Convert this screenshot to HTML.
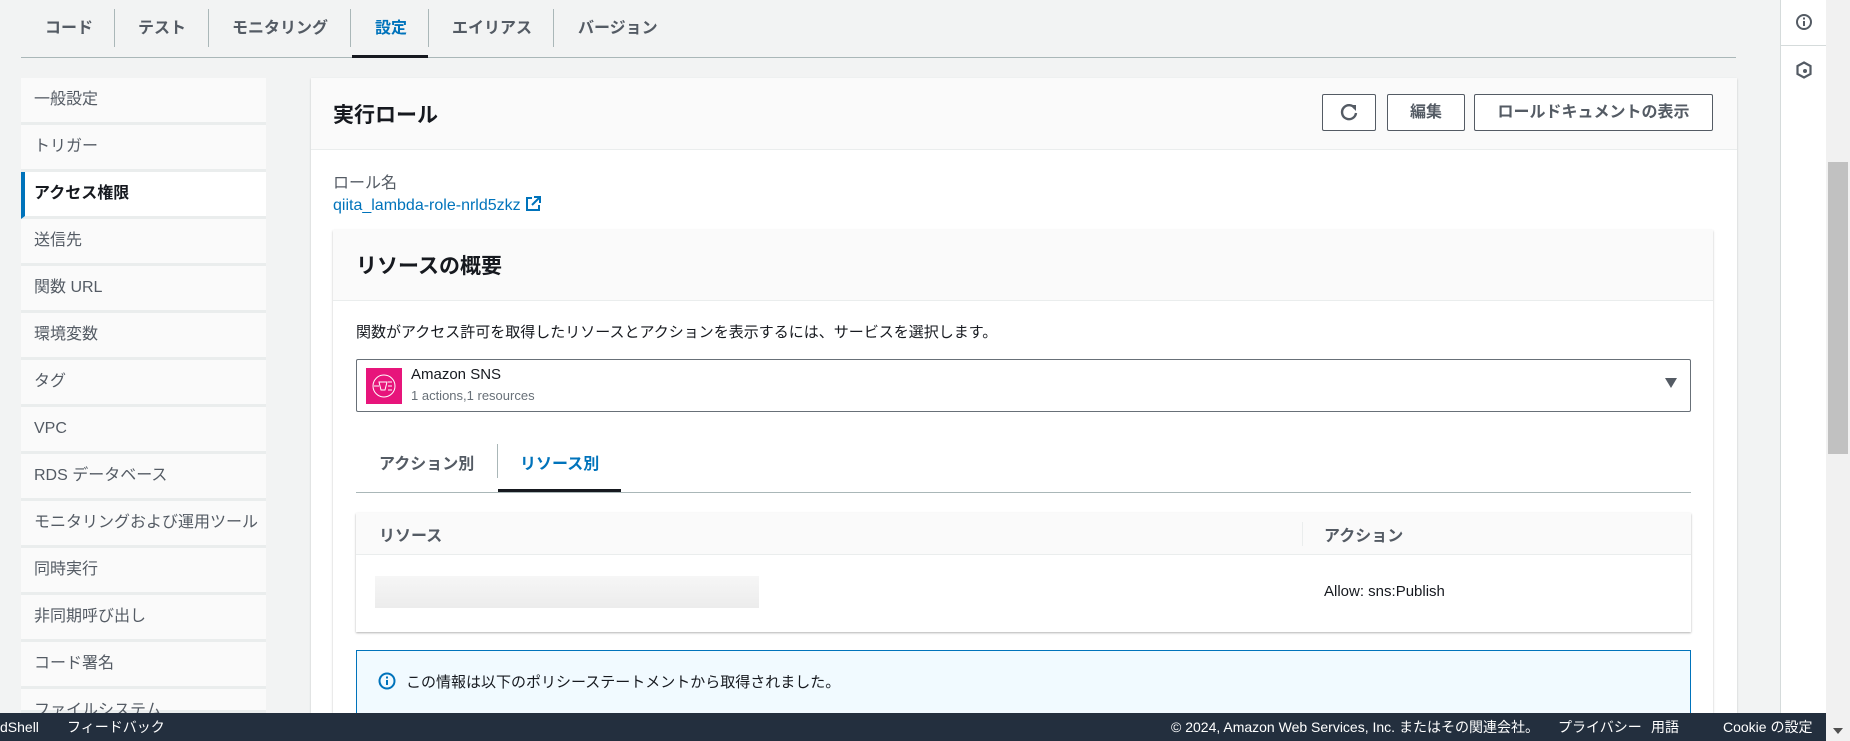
<!DOCTYPE html>
<html style="overflow:hidden;height:741px"><head><meta charset="utf-8"><style>
*{box-sizing:border-box;margin:0;padding:0}
body{width:1850px;height:741px;overflow:hidden;background:#f2f3f3;font-family:"Liberation Sans","Noto Sans CJK JP",sans-serif;color:#16191f;position:relative;font-size:16px}
.a{position:absolute;white-space:nowrap}
.tab{top:14px;font-size:16px;font-weight:bold;color:#545b64}
.sep{position:absolute;width:1px;background:#aab7b8}
.nav{position:absolute;left:21px;width:245px;background:#fafafa;border-bottom:3px solid #eaeded;height:47px;padding:0 0 0 13px;line-height:44px;font-size:16px;color:#545b64}
.btn{position:absolute;top:94px;height:37px;border:1px solid #545b64;border-radius:2px;background:#fff;font-weight:bold;color:#545b64;font-size:16px;text-align:center;line-height:35px}
</style></head><body>
<div class="a tab" style="left:45px">コード</div>
<div class="a tab" style="left:138px">テスト</div>
<div class="a tab" style="left:232px">モニタリング</div>
<div class="a tab" style="left:375px;color:#0073bb">設定</div>
<div class="a tab" style="left:452px">エイリアス</div>
<div class="a tab" style="left:578px">バージョン</div>
<div class="sep" style="left:114px;top:9px;height:38px"></div>
<div class="sep" style="left:208px;top:9px;height:38px"></div>
<div class="sep" style="left:350px;top:9px;height:38px"></div>
<div class="sep" style="left:428px;top:9px;height:38px"></div>
<div class="sep" style="left:553px;top:9px;height:38px"></div>
<div class="a" style="left:21px;top:57px;width:1715px;height:1px;background:#aab7b8"></div>
<div class="a" style="left:352px;top:55px;width:76px;height:3px;background:#16191f"></div>

<div class="nav" style="top:78px">一般設定</div>
<div class="nav" style="top:125px">トリガー</div>
<div class="nav" style="top:172px;background:#fff;color:#16191f;font-weight:bold;border-left:4px solid #0073bb;padding-left:9px">アクセス権限</div>
<div class="nav" style="top:219px">送信先</div>
<div class="nav" style="top:266px">関数 URL</div>
<div class="nav" style="top:313px">環境変数</div>
<div class="nav" style="top:360px">タグ</div>
<div class="nav" style="top:407px">VPC</div>
<div class="nav" style="top:454px">RDS データベース</div>
<div class="nav" style="top:501px">モニタリングおよび運用ツール</div>
<div class="nav" style="top:548px">同時実行</div>
<div class="nav" style="top:595px">非同期呼び出し</div>
<div class="nav" style="top:642px">コード署名</div>
<div class="nav" style="top:689px;height:24px">ファイルシステム</div>

<div class="a" style="left:311px;top:78px;width:1426px;height:635px;background:#fff;box-shadow:0 1px 2px rgba(0,0,0,.2)"></div>
<div class="a" style="left:311px;top:78px;width:1426px;height:72px;background:#fafafa;border-bottom:1px solid #eaeded"></div>
<div class="a" style="left:333px;top:99px;font-size:21px;font-weight:bold">実行ロール</div>
<div class="btn" style="left:1322px;width:54px"><svg width="22" height="22" viewBox="0 0 22 22" style="margin-top:7px"><path d="M17 6.5A7 7 0 1 0 18 11" fill="none" stroke="#545b64" stroke-width="2.4"/><path d="M12 3h6v6z" fill="#545b64"/></svg></div>
<div class="btn" style="left:1387px;width:78px">編集</div>
<div class="btn" style="left:1474px;width:239px">ロールドキュメントの表示</div>
<div class="a" style="left:333px;top:169px;color:#545b64">ロール名</div>
<div class="a" style="left:333px;top:196px;color:#0073bb">qiita_lambda-role-nrld5zkz <svg width="16" height="16" viewBox="0 0 16 16" style="vertical-align:-2px"><path d="M7 2H2v12h12V9" fill="none" stroke="#0073bb" stroke-width="2"/><path d="M9 1h6v6M15 1L7 9" fill="none" stroke="#0073bb" stroke-width="2"/></svg></div>

<div class="a" style="left:333px;top:230px;width:1380px;height:483px;background:#fff;box-shadow:0 1px 2px rgba(0,0,0,.25);border-top:1px solid #eaeded"></div>
<div class="a" style="left:333px;top:230px;width:1380px;height:71px;background:#fafafa;border-bottom:1px solid #eaeded"></div>
<div class="a" style="left:356px;top:250px;font-size:21px;font-weight:bold">リソースの概要</div>
<div class="a" style="left:356px;top:321px;font-size:15px">関数がアクセス許可を取得したリソースとアクションを表示するには、サービスを選択します。</div>
<div class="a" style="left:356px;top:359px;width:1335px;height:53px;border:1px solid #687078;border-radius:2px;background:#fff"></div>
<div class="a" style="left:366px;top:368px;width:36px;height:36px;background:#e7157b"><svg width="36" height="36" viewBox="0 0 36 36"><circle cx="18" cy="18" r="11" fill="none" stroke="#fff" stroke-width="1"/><path d="M13 14h8l-2 8h-4z M22 14h4M22 18h4M22 22h4M8 18h5" fill="none" stroke="#fff" stroke-width="1"/></svg></div>
<div class="a" style="left:411px;top:366px;font-size:15px">Amazon SNS</div>
<div class="a" style="left:411px;top:388px;font-size:13px;color:#687078">1 actions,1 resources</div>
<div class="a" style="left:1665px;top:378px;width:0;height:0;border-left:6px solid transparent;border-right:6px solid transparent;border-top:10px solid #545b64"></div>
<div class="a" style="left:379px;top:450px;font-weight:bold;color:#545b64">アクション別</div>
<div class="a" style="left:520px;top:450px;font-weight:bold;color:#0073bb">リソース別</div>
<div class="sep" style="left:497px;top:444px;height:34px"></div>
<div class="a" style="left:356px;top:492px;width:1335px;height:1px;background:#aab7b8"></div>
<div class="a" style="left:498px;top:489px;width:123px;height:3px;background:#16191f"></div>

<div class="a" style="left:356px;top:513px;width:1335px;height:119px;background:#fff;box-shadow:0 1px 2px rgba(0,0,0,.3);border-top:1px solid #eaeded"></div>
<div class="a" style="left:356px;top:513px;width:1335px;height:42px;background:#fafafa;border-bottom:1px solid #eaeded"></div>
<div class="a" style="left:379px;top:522px;font-weight:bold;color:#545b64">リソース</div>
<div class="sep" style="left:1302px;top:522px;height:24px;background:#eaeded"></div>
<div class="a" style="left:1324px;top:522px;font-weight:bold;color:#545b64">アクション</div>
<div class="a" style="left:375px;top:576px;width:384px;height:32px;background:linear-gradient(#f6f6f6,#ececec)"></div>
<div class="a" style="left:1324px;top:583px;font-size:15px">Allow: sns:Publish</div>

<div class="a" style="left:356px;top:650px;width:1335px;height:63px;background:#f1faff;border:1px solid #0073bb;border-bottom:none"></div>
<svg class="a" style="left:378px;top:672px" width="18" height="18" viewBox="0 0 18 18"><circle cx="9" cy="9" r="7.5" fill="none" stroke="#0073bb" stroke-width="2"/><rect x="8" y="8" width="2" height="5" fill="#0073bb"/><rect x="8" y="4.5" width="2" height="2" fill="#0073bb"/></svg>
<div class="a" style="left:406px;top:671px;font-size:15px">この情報は以下のポリシーステートメントから取得されました。</div>

<div class="a" style="left:1780px;top:0;width:46px;height:741px;background:#fff;border-left:1px solid #d5dbdb"></div>
<div class="a" style="left:1780px;top:45px;width:46px;height:1px;background:#d5dbdb"></div>
<svg class="a" style="left:1795px;top:13px" width="18" height="18" viewBox="0 0 18 18"><circle cx="9" cy="9" r="7" fill="none" stroke="#545b64" stroke-width="2"/><rect x="8" y="8" width="2" height="5" fill="#545b64"/><rect x="8" y="4.5" width="2" height="2" fill="#545b64"/></svg>
<svg class="a" style="left:1796px;top:61px" width="16" height="18" viewBox="0 0 16 18"><path d="M8 1.5L14.5 5v8L8 16.5 1.5 13V5z" fill="none" stroke="#545b64" stroke-width="2.2"/><circle cx="9" cy="10" r="2" fill="#545b64"/></svg>
<div class="a" style="left:1826px;top:0;width:24px;height:741px;background:#f1f1f1"></div>
<div class="a" style="left:1828px;top:162px;width:20px;height:292px;background:#c1c1c1"></div>
<div class="a" style="left:1833px;top:728px;border-left:5px solid transparent;border-right:5px solid transparent;border-top:6px solid #505050"></div>

<div class="a" style="left:0;top:713px;width:1826px;height:28px;background:#232f3e;color:#fff;font-size:14px;line-height:28px">
<span class="a" style="left:0">dShell</span><span class="a" style="left:67px">フィードバック</span>
<span class="a" style="left:1171px">© 2024, Amazon Web Services, Inc. またはその関連会社。</span>
<span class="a" style="left:1558px">プライバシー</span><span class="a" style="left:1651px">用語</span><span class="a" style="left:1723px">Cookie の設定</span></div>
</body></html>
